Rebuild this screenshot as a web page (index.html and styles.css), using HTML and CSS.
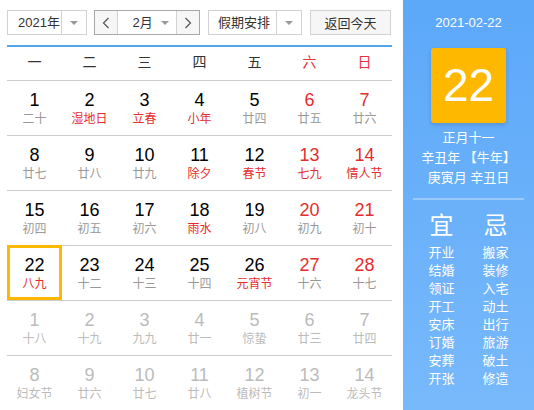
FILE: index.html
```html
<!DOCTYPE html>
<html lang="zh-CN">
<head>
  <meta charset="UTF-8" />
  <title>万年历</title>
  <link rel="stylesheet" href="styles.css">
</head>
<body>
  <div class="calendar">
    <div class="main">
      <div class="toolbar">
        <div class="select year">
          <span class="value">2021年</span>
          <span class="drop"><i class="caret"></i></span>
        </div>
        <div class="month-box">
          <span class="nav"><svg width="8" height="12" viewBox="0 0 8 12"><polyline points="6.5,1 1.5,6 6.5,11" fill="none" stroke="#555" stroke-width="1.2"/></svg></span>
          <span class="value">2月</span>
          <span class="drop plain"><i class="caret"></i></span>
          <span class="nav next"><svg width="8" height="12" viewBox="0 0 8 12"><polyline points="1.5,1 6.5,6 1.5,11" fill="none" stroke="#555" stroke-width="1.2"/></svg></span>
        </div>
        <div class="select holiday">
          <span class="value">假期安排</span>
          <span class="drop"><i class="caret"></i></span>
        </div>
        <button class="today-btn">返回今天</button>
      </div>

      <div class="week">
        <span>一</span><span>二</span><span>三</span><span>四</span><span>五</span>
        <span class="red">六</span><span class="red">日</span>
      </div>

      <div class="days">
        <div class="day"><b>1</b><em>二十</em></div>
        <div class="day"><b>2</b><em class="fest">湿地日</em></div>
        <div class="day"><b>3</b><em class="fest">立春</em></div>
        <div class="day"><b>4</b><em class="fest">小年</em></div>
        <div class="day"><b>5</b><em>廿四</em></div>
        <div class="day weekend"><b>6</b><em>廿五</em></div>
        <div class="day weekend"><b>7</b><em>廿六</em></div>

        <div class="day"><b>8</b><em>廿七</em></div>
        <div class="day"><b>9</b><em>廿八</em></div>
        <div class="day"><b>10</b><em>廿九</em></div>
        <div class="day"><b>11</b><em class="fest">除夕</em></div>
        <div class="day"><b>12</b><em class="fest">春节</em></div>
        <div class="day weekend"><b>13</b><em class="fest">七九</em></div>
        <div class="day weekend"><b>14</b><em class="fest">情人节</em></div>

        <div class="day"><b>15</b><em>初四</em></div>
        <div class="day"><b>16</b><em>初五</em></div>
        <div class="day"><b>17</b><em>初六</em></div>
        <div class="day"><b>18</b><em class="fest">雨水</em></div>
        <div class="day"><b>19</b><em>初八</em></div>
        <div class="day weekend"><b>20</b><em>初九</em></div>
        <div class="day weekend"><b>21</b><em>初十</em></div>

        <div class="day today"><b>22</b><em class="fest">八九</em></div>
        <div class="day"><b>23</b><em>十二</em></div>
        <div class="day"><b>24</b><em>十三</em></div>
        <div class="day"><b>25</b><em>十四</em></div>
        <div class="day"><b>26</b><em class="fest">元宵节</em></div>
        <div class="day weekend"><b>27</b><em>十六</em></div>
        <div class="day weekend"><b>28</b><em>十七</em></div>

        <div class="day other"><b>1</b><em>十八</em></div>
        <div class="day other"><b>2</b><em>十九</em></div>
        <div class="day other"><b>3</b><em>九九</em></div>
        <div class="day other"><b>4</b><em>廿一</em></div>
        <div class="day other"><b>5</b><em>惊蛰</em></div>
        <div class="day other"><b>6</b><em>廿三</em></div>
        <div class="day other"><b>7</b><em>廿四</em></div>

        <div class="day other"><b>8</b><em>妇女节</em></div>
        <div class="day other"><b>9</b><em>廿六</em></div>
        <div class="day other"><b>10</b><em>廿七</em></div>
        <div class="day other"><b>11</b><em>廿八</em></div>
        <div class="day other"><b>12</b><em>植树节</em></div>
        <div class="day other"><b>13</b><em>初一</em></div>
        <div class="day other"><b>14</b><em>龙头节</em></div>
      </div>
    </div>

    <div class="side">
      <div class="side-date">2021-02-22</div>
      <div class="big-day">22</div>
      <div class="lunar">
        <p>正月十一</p>
        <p>辛丑年 【牛年】</p>
        <p>庚寅月 辛丑日</p>
      </div>
      <div class="almanac">
        <ul>
          <li class="head">宜</li>
          <li>开业</li><li>结婚</li><li>领证</li><li>开工</li>
          <li>安床</li><li>订婚</li><li>安葬</li><li>开张</li>
        </ul>
        <ul>
          <li class="head">忌</li>
          <li>搬家</li><li>装修</li><li>入宅</li><li>动土</li>
          <li>出行</li><li>旅游</li><li>破土</li><li>修造</li>
        </ul>
      </div>
    </div>
  </div>
</body>
</html>
```

FILE: styles.css
```css
body { margin: 0; background: #fff; font-family: "Liberation Sans", "Noto Sans CJK SC", sans-serif; color: #333; }
.calendar { display: flex; width: 534px; height: 410px; overflow: hidden; }

/* left: toolbar + month grid */
.main { width: 385px; margin-left: 7px; }
.toolbar { display: flex; height: 25px; margin-top: 10px; font-size: 13px; }
.select, .month-box { display: flex; box-sizing: border-box; height: 25px; border: 1px solid #d2d2d2; background: #fff; }
.select .value, .month-box .value { flex: 1; line-height: 23px; padding-left: 10px; white-space: nowrap; }
.drop { display: flex; align-items: center; justify-content: center; width: 24px; border-left: 1px solid #d2d2d2; }
.drop.plain { border-left: none; }
.caret { width: 0; height: 0; border-left: 4px solid transparent; border-right: 4px solid transparent; border-top: 4px solid #999; }
.year { width: 80px; }
.month-box { width: 106px; margin-left: 7px; border-color: #a8a8a8; }
.month-box .value { padding-left: 15px; }
.nav { display: flex; align-items: center; justify-content: center; width: 22px; background: #f6f6f6; border-right: 1px solid #d2d2d2; }
.nav.next { border-right: none; border-left: 1px solid #d2d2d2; }
.holiday { width: 94px; margin-left: 8px; }
.holiday .value { padding-left: 9px; }
.today-btn { width: 81px; height: 25px; margin-left: 8px; padding: 0; border: 1px solid #d2d2d2; background: #f6f6f6; font: inherit; font-size: 13px; color: #333; }

.week { display: grid; grid-template-columns: repeat(7, 1fr); height: 33px; margin-top: 10px; border-top: 2px solid #52a5f0; font-size: 14px; line-height: 31px; text-align: center; color: #333; }
.week .red { color: #e8303a; }

.days { display: grid; grid-template-columns: repeat(7, 1fr); grid-auto-rows: 55px; }
.day { box-sizing: border-box; border-top: 1px solid #ccc; padding-top: 9px; text-align: center; }
.day b { display: block; font-weight: normal; font-size: 18px; line-height: 20px; color: #000; }
.day em { display: block; font-style: normal; font-size: 12px; line-height: 18px; color: #999; }
.day em.fest { color: #e52d2d; }
.day.weekend b { color: #e52d2d; }
.day.other b { color: #bbb; }
.day.other em { color: #bbb; }
.day.today { border: 3px solid #ffb800; padding-top: 7px; }

/* right: selected day details */
.side { width: 131px; margin-left: 11px; background: linear-gradient(#5ca8f9, #78b9fb); color: #fff; text-align: center; }
.side-date { margin-top: 15px; font-size: 13px; line-height: 16px; }
.big-day { width: 75px; height: 75px; margin: 17px auto 0; border-radius: 3px; background: #ffb800; box-shadow: 0 2px 4px rgba(0, 0, 0, 0.15); font-size: 46px; line-height: 75px; }
.lunar { margin-top: 5px; padding-bottom: 10px; margin-left: 10px; margin-right: 10px; border-bottom: 2px solid #99c9fb; font-size: 13px; line-height: 20px; }
.lunar p { margin: 0; }
.almanac { display: flex; justify-content: center; gap: 28px; margin-top: 12px; }
.almanac ul { margin: 0; padding: 0; list-style: none; font-size: 13px; line-height: 18px; }
.almanac .head { font-size: 24px; line-height: 28px; margin-bottom: 4px; }
```
